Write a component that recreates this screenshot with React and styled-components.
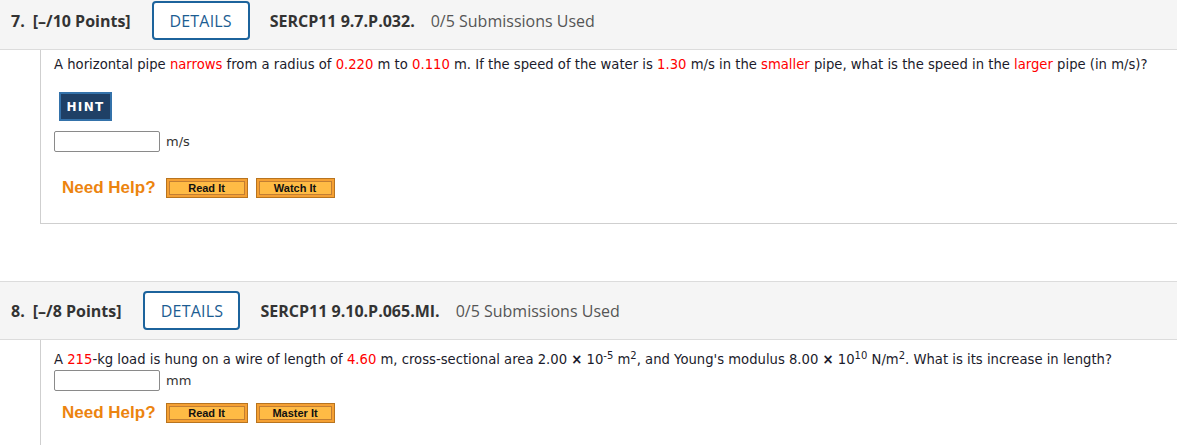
import styled, { createGlobalStyle } from "styled-components";

const GlobalStyle = createGlobalStyle`
  body {
    margin: 0;
    background: #fff;
    font-family: "Open Sans", sans-serif;
    overflow: hidden;
  }
`;

const Page = styled.div`
  display: flex;
  flex-direction: column;
  margin-top: -9px;
`;

const Question = styled.section`
  display: flex;
  flex-direction: column;
  margin-bottom: ${(p) => (p.$last ? "0" : "57px")};
`;

const Header = styled.div`
  display: flex;
  align-items: center;
  height: 57px;
  padding-left: 11px;
  background: #f5f5f5;
  border-top: 1px solid #dcdcdc;
  border-bottom: 1px solid #dcdcdc;
  color: #333;
`;

const Num = styled.span`
  font-weight: 700;
  font-size: 16px;
  margin-right: 8px;
`;

const Points = styled.span`
  font-weight: 700;
  font-size: 16px;
  color: #333;
`;

const DetailsButton = styled.button`
  box-sizing: border-box;
  width: ${(p) => p.$w}px;
  height: 39px;
  margin-left: ${(p) => p.$ml}px;
  margin-right: 20px;
  border: 2px solid #1c639c;
  border-radius: 4px;
  background: #fff;
  color: #1c5d92;
  font-family: "Open Sans", sans-serif;
  font-size: 16px;
  letter-spacing: 0.2px;
  cursor: pointer;
`;

const Code = styled.span`
  font-weight: 700;
  font-size: 16px;
  color: #333;
  margin-right: 16px;
`;

const Used = styled.span`
  font-size: 16px;
  color: #555;
`;

const Body = styled.div`
  display: flex;
  flex-direction: column;
  align-items: flex-start;
  margin-left: 40px;
  padding: ${(p) => p.$pad};
  border-left: 1px solid #cfcfcf;
  border-bottom: ${(p) => (p.$last ? "none" : "1px solid #cfcfcf")};
`;

const Text = styled.p`
  margin: 0;
  font-family: "DejaVu Sans", Verdana, sans-serif;
  font-size: 13.2px;
  line-height: 18px;
  color: #1b1b2b;
  white-space: nowrap;

  sup {
    font-size: 10px;
    line-height: 0;
    vertical-align: 5px;
  }
`;

const Val = styled.span`
  color: #f00;
`;

const Hint = styled.button`
  box-sizing: border-box;
  margin: 18px 0 0 5px;
  width: 53px;
  height: 29px;
  background: #1f4066;
  border: 2px solid #3472aa;
  color: #fff;
  font-family: "DejaVu Sans", Verdana, sans-serif;
  font-weight: 700;
  font-size: 12px;
  letter-spacing: 1.3px;
  padding: 0;
`;

const AnswerRow = styled.div`
  display: flex;
  align-items: center;
  gap: 6px;
  margin-top: ${(p) => p.$mt}px;
`;

const Input = styled.input`
  box-sizing: border-box;
  width: 106px;
  height: 21px;
  border: 1px solid #8a8a8a;
  border-radius: 2px;
  background: #fff;
`;

const Unit = styled.span`
  font-family: "DejaVu Sans", Verdana, sans-serif;
  font-size: 13px;
  color: #333;
`;

const HelpRow = styled.div`
  display: flex;
  align-items: center;
  margin: ${(p) => p.$mt}px 0 0 8px;
`;

const NeedHelp = styled.span`
  font-family: "Liberation Sans", Arial, sans-serif;
  font-weight: 700;
  font-size: 17px;
  color: #ec840f;
  margin-right: 10px;
`;

const HelpButton = styled.button`
  box-sizing: border-box;
  width: ${(p) => p.$w}px;
  height: 20px;
  margin-right: 8px;
  padding: 0;
  background: #ffbb45;
  border: 1px solid #b8741f;
  box-shadow: inset 0 0 0 2px #f5a033, inset 0 0 0 3px #c27e33;
  font-family: "Liberation Sans", Arial, sans-serif;
  font-weight: 700;
  font-size: 11px;
  color: #111;
`;

const HeaderBar = ({ num, points, detailsW, detailsMl, code }) => (
  <Header>
    <Num>{num}</Num>
    <Points>{points}</Points>
    <DetailsButton $w={detailsW} $ml={detailsMl}>DETAILS</DetailsButton>
    <Code>{code}</Code>
    <Used>0/5 Submissions Used</Used>
  </Header>
);

export default function App() {
  return (
    <>
      <GlobalStyle />
      <Page>
        <Question>
          <HeaderBar num="7." points="[–/10 Points]" detailsW={98} detailsMl={21} code="SERCP11 9.7.P.032." />
          <Body $pad="6px 0 25px 13px">
            <Text>
              A horizontal pipe <Val>narrows</Val> from a radius of <Val>0.220</Val> m to <Val>0.110</Val> m. If the
              speed of the water is <Val>1.30</Val> m/s in the <Val>smaller</Val> pipe, what is the speed in the{" "}
              <Val>larger</Val> pipe (in m/s)?
            </Text>
            <Hint>HINT</Hint>
            <AnswerRow $mt={10}>
              <Input />
              <Unit>m/s</Unit>
            </AnswerRow>
            <HelpRow $mt={26}>
              <NeedHelp>Need Help?</NeedHelp>
              <HelpButton $w={82}>Read It</HelpButton>
              <HelpButton $w={79}>Watch It</HelpButton>
            </HelpRow>
          </Body>
        </Question>
        <Question $last>
          <HeaderBar num="8." points="[–/8 Points]" detailsW={97} detailsMl={22} code="SERCP11 9.10.P.065.MI." />
          <Body $pad="11px 0 30px 13px" $last>
            <Text>
              A <Val>215</Val>-kg load is hung on a wire of length of <Val>4.60</Val> m, cross-sectional area 2.00{" "}
              <b>×</b> 10<sup>-5</sup> m<sup>2</sup>, and Young's modulus 8.00 <b>×</b> 10<sup>10</sup> N/m
              <sup>2</sup>. What is its increase in length?
            </Text>
            <AnswerRow $mt={1}>
              <Input />
              <Unit>mm</Unit>
            </AnswerRow>
            <HelpRow $mt={12}>
              <NeedHelp>Need Help?</NeedHelp>
              <HelpButton $w={82}>Read It</HelpButton>
              <HelpButton $w={79}>Master It</HelpButton>
            </HelpRow>
          </Body>
        </Question>
      </Page>
    </>
  );
}
